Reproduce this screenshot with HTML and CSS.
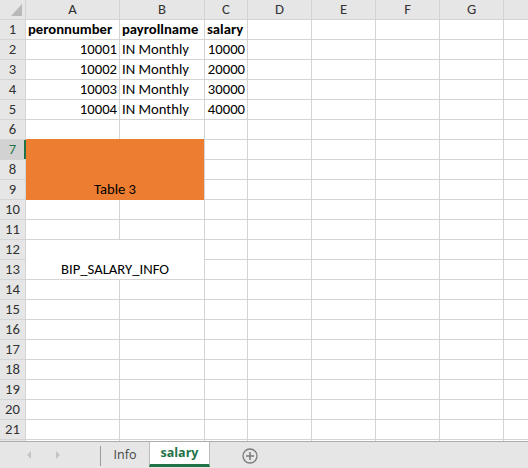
FILE: index.html
```html
<!DOCTYPE html>
<html>
<head>
<meta charset="utf-8">
<link rel="stylesheet" href="styles.css">
</head>
<body>
<div class="app">
  <div class="sheet">
    <div class="corner"><svg width="25" height="19" viewBox="0 0 25 19"><polygon points="11,16 22,16 22,4" fill="#b9b9b9"/></svg></div>
    <div class="ch">A</div><div class="ch">B</div><div class="ch">C</div><div class="ch">D</div><div class="ch">E</div><div class="ch">F</div><div class="ch">G</div><div class="ch"></div>

    <div class="rh">1</div><div class="c b">peronnumber</div><div class="c b">payrollname</div><div class="c b">salary</div><div class="c"></div><div class="c"></div><div class="c"></div><div class="c"></div><div class="c"></div>
    <div class="rh">2</div><div class="c n">10001</div><div class="c">IN Monthly</div><div class="c n">10000</div><div class="c"></div><div class="c"></div><div class="c"></div><div class="c"></div><div class="c"></div>
    <div class="rh">3</div><div class="c n">10002</div><div class="c">IN Monthly</div><div class="c n">20000</div><div class="c"></div><div class="c"></div><div class="c"></div><div class="c"></div><div class="c"></div>
    <div class="rh">4</div><div class="c n">10003</div><div class="c">IN Monthly</div><div class="c n">30000</div><div class="c"></div><div class="c"></div><div class="c"></div><div class="c"></div><div class="c"></div>
    <div class="rh">5</div><div class="c n">10004</div><div class="c">IN Monthly</div><div class="c n">40000</div><div class="c"></div><div class="c"></div><div class="c"></div><div class="c"></div><div class="c"></div>
    <div class="rh">6</div><div class="c"></div><div class="c"></div><div class="c"></div><div class="c"></div><div class="c"></div><div class="c"></div><div class="c"></div><div class="c"></div>
    <div class="rh sel">7</div><div class="c merge fill">Table 3</div><div class="c"></div><div class="c"></div><div class="c"></div><div class="c"></div><div class="c"></div><div class="c"></div>
    <div class="rh">8</div><div class="c"></div><div class="c"></div><div class="c"></div><div class="c"></div><div class="c"></div><div class="c"></div>
    <div class="rh">9</div><div class="c"></div><div class="c"></div><div class="c"></div><div class="c"></div><div class="c"></div><div class="c"></div>
    <div class="rh">10</div><div class="c"></div><div class="c"></div><div class="c"></div><div class="c"></div><div class="c"></div><div class="c"></div><div class="c"></div><div class="c"></div>
    <div class="rh">11</div><div class="c"></div><div class="c"></div><div class="c"></div><div class="c"></div><div class="c"></div><div class="c"></div><div class="c"></div><div class="c"></div>
    <div class="rh">12</div><div class="c merge2">BIP_SALARY_INFO</div><div class="c"></div><div class="c"></div><div class="c"></div><div class="c"></div><div class="c"></div><div class="c"></div>
    <div class="rh">13</div><div class="c"></div><div class="c"></div><div class="c"></div><div class="c"></div><div class="c"></div><div class="c"></div>
    <div class="rh">14</div><div class="c"></div><div class="c"></div><div class="c"></div><div class="c"></div><div class="c"></div><div class="c"></div><div class="c"></div><div class="c"></div>
    <div class="rh">15</div><div class="c"></div><div class="c"></div><div class="c"></div><div class="c"></div><div class="c"></div><div class="c"></div><div class="c"></div><div class="c"></div>
    <div class="rh">16</div><div class="c"></div><div class="c"></div><div class="c"></div><div class="c"></div><div class="c"></div><div class="c"></div><div class="c"></div><div class="c"></div>
    <div class="rh">17</div><div class="c"></div><div class="c"></div><div class="c"></div><div class="c"></div><div class="c"></div><div class="c"></div><div class="c"></div><div class="c"></div>
    <div class="rh">18</div><div class="c"></div><div class="c"></div><div class="c"></div><div class="c"></div><div class="c"></div><div class="c"></div><div class="c"></div><div class="c"></div>
    <div class="rh">19</div><div class="c"></div><div class="c"></div><div class="c"></div><div class="c"></div><div class="c"></div><div class="c"></div><div class="c"></div><div class="c"></div>
    <div class="rh">20</div><div class="c"></div><div class="c"></div><div class="c"></div><div class="c"></div><div class="c"></div><div class="c"></div><div class="c"></div><div class="c"></div>
    <div class="rh">21</div><div class="c"></div><div class="c"></div><div class="c"></div><div class="c"></div><div class="c"></div><div class="c"></div><div class="c"></div><div class="c"></div>
    <div class="rh"></div><div class="c"></div><div class="c"></div><div class="c"></div><div class="c"></div><div class="c"></div><div class="c"></div><div class="c"></div><div class="c"></div>
  </div>
  <div class="tabs">
    <div class="nav"><svg width="100" height="26" viewBox="0 0 100 26"><polygon points="31,9 27,13 31,17" fill="#c3c3c3"/><polygon points="56,9 60,13 56,17" fill="#c3c3c3"/></svg></div>
    <div class="sep"></div>
    <div class="tab">Info</div>
    <div class="tab active">salary</div>
    <div class="add"><svg width="16" height="16" viewBox="0 0 16 16"><circle cx="8" cy="8" r="7" fill="none" stroke="#7a7a7a" stroke-width="1.3"/><path d="M8 4v8M4 8h8" stroke="#7a7a7a" stroke-width="1.5"/></svg></div>
  </div>
</div>
</body>
</html>
```
FILE: styles.css
```css
* { box-sizing: border-box; margin: 0; padding: 0; }
html, body { width: 528px; height: 468px; overflow: hidden; background: #fff; }
body { font-family: Carlito, Calibri, Lato, "Liberation Sans", sans-serif; font-size: 14.67px; color: #000; }
.app { display: flex; flex-direction: column; height: 468px; }
.sheet {
  flex: none;
  height: 441px;
  overflow: hidden;
  display: grid;
  grid-template-columns: 25px 93px 84px 42px 63px 63px 63px 63px 1fr;
  grid-auto-rows: 19px;
  gap: 1px;
  background: #d4d4d4;
}
.corner { background: #e6e6e6; display: flex; }
.ch, .rh { background: #e6e6e6; color: #333; text-align: center; line-height: 19px; }
.rh.sel { background: #d2d2d2; color: #217346; box-shadow: inset -1px 0 #217346, 1px 0 0 #217346; }
.c { background: #fff; display: flex; align-items: flex-end; padding: 0 2px; line-height: 19px; white-space: nowrap; overflow: hidden; }
.n { justify-content: flex-end; }
.b { font-weight: bold; }
.merge { grid-column: span 2; grid-row: span 3; justify-content: center; }
.fill { background: #ed7d31; margin: -1px 0 -1px 0; padding-bottom: 1px; }
.merge2 { grid-column: span 2; grid-row: span 2; justify-content: center; }
.tabs {
  flex: 1;
  background: #e6e6e6;
  border-top: 1px solid #acacac;
  display: flex;
  align-items: flex-start;
  font-family: "Open Sans", "Noto Sans", sans-serif;
  font-size: 12.5px;
}
.nav { width: 100px; height: 26px; display: flex; }
.sep { width: 1px; height: 20px; margin-top: 4px; background: #9a9a9a; }
.tab { width: 48px; text-align: center; line-height: 26px; color: #444; }
.tab.active {
  width: 61px;
  height: 25px;
  line-height: 22px;
  background: #fff;
  border-left: 1px solid #bdbdbd;
  border-right: 1px solid #bdbdbd;
  border-bottom: 3px solid #217346;
  color: #217346;
  font-weight: bold;
}
.add { margin-left: 32px; margin-top: 6px; display: flex; }
```
